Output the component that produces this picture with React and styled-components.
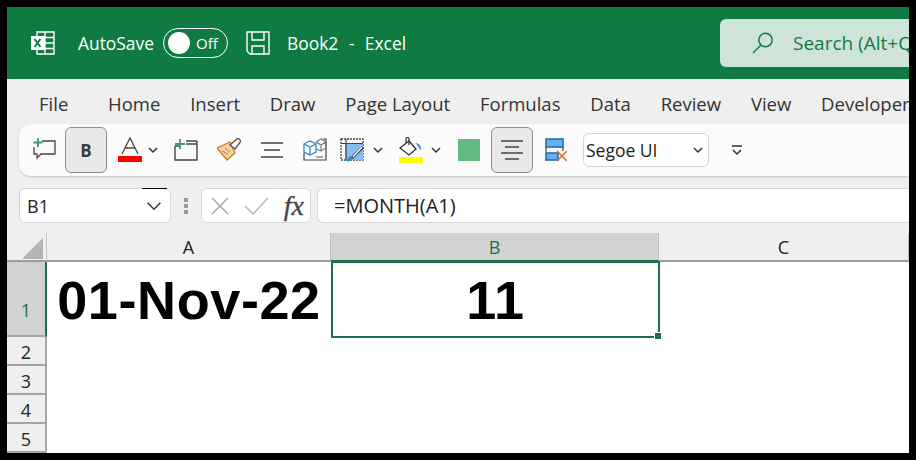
import React from 'react';
import styled, { createGlobalStyle } from 'styled-components';

const Global = createGlobalStyle`
  html, body {
    margin: 0;
    padding: 0;
    background: #000;
    font-family: "Open Sans", "Noto Sans", sans-serif;
  }
`;

const Frame = styled.div`
  width: 902px;
  height: 446px;
  margin: 7px;
  background: #efefef;
  overflow: hidden;
  display: flex;
  flex-direction: column;
`;

const TitleBar = styled.div`
  height: 72px;
  flex-shrink: 0;
  background: #107a43;
  color: #fff;
  display: flex;
  align-items: center;
  padding-left: 24px;
  font-size: 17.4px;
  white-space: nowrap;
`;

const AutoSave = styled.span`
  margin-left: 23px;
`;

const Toggle = styled.div`
  width: 65px;
  height: 30px;
  box-sizing: border-box;
  margin: 0 18px 0 9px;
  border: 1px solid #fff;
  border-radius: 15px;
  display: flex;
  align-items: center;
  padding-left: 4px;
  gap: 6px;
  font-size: 15px;
`;

const Knob = styled.span`
  width: 22px;
  height: 22px;
  border-radius: 50%;
  background: #fff;
`;

const DocName = styled.span`
  margin-left: 17px;
  word-spacing: 6px;
`;

const SearchBox = styled.div`
  margin-left: auto;
  width: 189px;
  height: 48px;
  flex-shrink: 0;
  box-sizing: border-box;
  background: #cfe4d9;
  border-radius: 6px 0 0 6px;
  display: flex;
  align-items: center;
  padding-left: 32px;
  gap: 19px;
  color: #107a43;
  font-size: 19px;
  overflow: hidden;
  & > * {
    flex-shrink: 0;
  }
`;

const Menu = styled.div`
  height: 45px;
  flex-shrink: 0;
  box-sizing: border-box;
  padding: 3px 0 0 32px;
  display: flex;
  align-items: center;
  gap: 29.8px;
  color: #333;
  font-size: 18.5px;
  white-space: nowrap;
`;

const FileTab = styled.span`
  margin-right: 10px;
`;

const Toolbar = styled.div`
  height: 52px;
  flex-shrink: 0;
  margin-left: 12px;
  background: #fbfbfb;
  border-radius: 12px 0 0 12px;
  box-shadow: 0 1px 2px rgba(0, 0, 0, 0.18);
  display: flex;
  align-items: center;
  padding-left: 4px;
`;

const Slot = styled.div`
  width: ${p => p.$w}px;
  height: ${p => (p.$active ? 46 : 42)}px;
  margin-left: ${p => p.$ml || 0}px;
  flex-shrink: 0;
  box-sizing: border-box;
  display: flex;
  align-items: center;
  justify-content: center;
  & > svg {
    flex-shrink: 0;
  }
  ${p => p.$active && `
    background: #e9e9e9;
    border: 1px solid #8f8f8f;
    border-radius: 6px;
  `}
`;

const BoldMark = styled.span`
  font-weight: 700;
  font-size: 17px;
  color: #3a3a3a;
`;

const FontSelect = styled.div`
  width: 126px;
  height: 34px;
  box-sizing: border-box;
  margin-left: 4px;
  flex-shrink: 0;
  background: #fff;
  border: 1px solid #d4d4d4;
  border-radius: 6px;
  display: flex;
  align-items: center;
  justify-content: space-between;
  padding: 0 5px 0 2px;
  font-size: 17.5px;
  color: #222;
`;

const FormulaRow = styled.div`
  height: 35px;
  flex-shrink: 0;
  margin: 12px 0 10px 12px;
  display: flex;
  align-items: stretch;
`;

const FieldBox = styled.div`
  background: #fff;
  border: 1px solid #d6d6d6;
  border-radius: 6px;
  box-sizing: border-box;
  display: flex;
  align-items: center;
  font-size: 18px;
  color: #222;
`;

const NameBox = styled(FieldBox)`
  position: relative;
  width: 152px;
  justify-content: space-between;
  padding: 0 8px 0 7px;
  &::before {
    content: "";
    position: absolute;
    top: -1px;
    left: 122px;
    width: 25px;
    height: 1px;
    background: #000;
  }
`;

const Grip = styled.div`
  width: 30px;
  display: flex;
  flex-direction: column;
  align-items: center;
  justify-content: center;
  gap: 2px;
  & > i {
    width: 4px;
    height: 4px;
    background: #9a9a9a;
  }
`;

const FxBox = styled(FieldBox)`
  width: 110px;
  justify-content: space-between;
  padding: 0 6px 0 9px;
`;

const FxMark = styled.span`
  font-family: "Liberation Serif", serif;
  font-style: italic;
  font-size: 28px;
  color: #444;
  -webkit-text-stroke: 0.3px #444;
`;

const Input = styled(FieldBox)`
  flex: 1;
  margin-left: 6px;
  padding-left: 16px;
  border-right: none;
  border-radius: 6px 0 0 6px;
  font-size: 20px;
`;

const Sheet = styled.div`
  flex: 1;
  display: grid;
  grid-template-columns: 40px 284px 328px 1fr;
  grid-template-rows: 29px 75px repeat(4, 29px);
  background: #fff;
`;

const Corner = styled.div`
  background: #efefef;
  border-right: 1px solid #c4c4c4;
  border-bottom: 2px solid #9d9d9d;
  display: flex;
  align-items: flex-end;
  justify-content: flex-end;
  padding: 0 3px 1px 0;
  box-sizing: border-box;
`;

const ColHead = styled.div`
  background: ${p => (p.$selected ? '#d2d2d2' : '#efefef')};
  border-bottom: 2px solid ${p => (p.$selected ? '#1e7145' : '#9d9d9d')};
  border-right: 1px solid #bdbdbd;
  box-sizing: border-box;
  display: flex;
  align-items: center;
  justify-content: center;
  font-size: 18px;
  color: ${p => (p.$selected ? '#1e7145' : '#222')};
`;

const RowHead = styled.div`
  background: ${p => (p.$selected ? '#d2d2d2' : '#efefef')};
  border-bottom: 2px solid #a5a5a5;
  border-right: 2px solid ${p => (p.$selected ? '#1e7145' : '#a5a5a5')};
  box-sizing: border-box;
  display: flex;
  align-items: ${p => (p.$selected ? 'flex-end' : 'center')};
  justify-content: center;
  padding-top: 2px;
  font-size: 18px;
  line-height: 1;
  color: ${p => (p.$selected ? '#1e7145' : '#222')};
  ${p => p.$selected && 'padding-bottom: 16px;'}
`;

const Cell = styled.div`
  background: #fff;
  display: flex;
  align-items: center;
  justify-content: center;
  font-family: "Liberation Sans", Arial, sans-serif;
  font-weight: 700;
  font-size: 54px;
  letter-spacing: 0.6px;
  color: #000;
  white-space: nowrap;
`;

const ActiveCell = styled(Cell)`
  position: relative;
  margin: -1px -1px -1px 0;
  border: 2px solid #1e7145;
  box-sizing: border-box;
`;

const FillHandle = styled.span`
  position: absolute;
  right: -4px;
  bottom: -4px;
  width: 6px;
  height: 6px;
  background: #1e7145;
  border: 1px solid #fff;
`;

const Chevron = ({ size = 10, color = '#333', stroke = 1.5 }) => (
  <svg width={size} height={size} viewBox="0 0 10 10">
    <path d="M1 3l4 4 4-4" fill="none" stroke={color} strokeWidth={stroke} />
  </svg>
);

const ExcelIcon = () => (
  <svg width="24" height="24" viewBox="0 0 24 24">
    <path d="M6 1h17v22H6z" fill="none" stroke="#fff" strokeWidth="1.4" />
    <path d="M14 1v22M14 6.500h9M14 12h9M14 17.500h9" stroke="#fff" strokeWidth="1.4" />
    <rect x="0" y="5" width="14" height="14" fill="#fff" />
    <path d="M3.500 8l6 8M9.500 8l-6 8" stroke="#107a43" strokeWidth="2" />
  </svg>
);

const SaveIcon = () => (
  <svg width="24" height="24" viewBox="0 0 24 24" fill="none" stroke="#fff" strokeWidth="1.4">
    <path d="M1 1h22v22H4l-3-3z" />
    <path d="M6 1v8h12V1M6 23v-8h12v8" />
  </svg>
);

const SearchIcon = () => (
  <svg width="22" height="22" viewBox="0 0 22 22" fill="none" stroke="#107a43" strokeWidth="1.5">
    <circle cx="13.500" cy="8" r="6.700" />
    <path d="M9 13L1 21" />
  </svg>
);

const CommentIcon = () => (
  <svg width="24" height="24" viewBox="0 0 24 24" fill="none">
    <path d="M10 3h13v13H9l-4 4v-4H2V9" stroke="#444" strokeWidth="1.3" />
    <path d="M6 0v9M1.500 4.500h9" stroke="#3a9a6a" strokeWidth="1.8" />
  </svg>
);

const FontColorIcon = () => (
  <svg width="24" height="26" viewBox="0 0 24 26" fill="none">
    <path d="M4 17L12 1l8 16M7 11h10" stroke="#444" strokeWidth="1.3" />
    <rect y="19" width="24" height="6" fill="#f00" />
  </svg>
);

const NewSheetIcon = () => (
  <svg width="24" height="24" viewBox="0 0 24 24" fill="none">
    <path d="M12 3h11M23 6H12M1 8v14h22V3" stroke="#444" strokeWidth="1.4" />
    <path d="M1 8h5" stroke="#444" strokeWidth="1.4" />
    <path d="M6 1v10M1 6h10" stroke="#3a9a6a" strokeWidth="1.8" />
  </svg>
);

const BrushIcon = () => (
  <svg width="24" height="24" viewBox="0 0 24 24">
    <path d="M0 10l13-6 5 11-8 7z" fill="#f6d2a4" stroke="#cf7a20" strokeWidth="1.3" />
    <path d="M5 13l6 3M8 10l5 4" stroke="#cf7a20" strokeWidth="1" />
    <path d="M13 7l8-7 3 3-6 8z" fill="#fff" stroke="#555" strokeWidth="1.4" />
  </svg>
);

const AlignIcon = () => (
  <svg width="22" height="16" viewBox="0 0 22 16">
    <path d="M0 1h22M3 8h16M0 15h22" stroke="#444" strokeWidth="1.3" />
  </svg>
);

const AlignCenterIcon = () => (
  <svg width="24" height="20" viewBox="0 0 24 20">
    <path d="M1 1h22M5 7h14M1 13h22M5 19h14" stroke="#444" strokeWidth="1.3" />
  </svg>
);

const CubesIcon = () => (
  <svg width="24" height="24" viewBox="0 0 24 24" fill="none">
    <path d="M1 15v7h22V1h-3" stroke="#444" strokeWidth="1.2" />
    <path d="M1 6l6-3 6 3v8l-6 3-6-3zM1 6l6 3 6-3M7 9v8" fill="#fff" stroke="#2f86d0" strokeWidth="1.3" />
    <path d="M13 4l5-3 5 3v6l-5 3-5-2M13 4l5 3 5-3M18 7v6" stroke="#777" strokeWidth="1.1" />
    <path d="M13 19h7" stroke="#555" strokeWidth="1" />
  </svg>
);

const BorderIcon = () => (
  <svg width="24" height="24" viewBox="0 0 24 24" fill="none">
    <rect x="1" y="1" width="22" height="21" stroke="#444" strokeWidth="1.3" strokeDasharray="2 1" />
    <rect x="5" y="6" width="18" height="16" fill="#86bdf0" />
    <path d="M1 5.500h22M6 1v21" stroke="#444" strokeWidth="1.2" />
    <path d="M23 9L12 20" stroke="#444" strokeWidth="3" />
    <path d="M22 9L13 19" stroke="#fff" strokeWidth="1.2" />
    <path d="M9 19c2-2 4 0 3 2-1 2-4 3-6 2 1-1 2-2 3-4z" fill="#2f86d0" />
  </svg>
);

const FillIcon = () => (
  <svg width="24" height="26" viewBox="0 0 24 26" fill="none">
    <path d="M1 11l9-7 7 8-7 6z" fill="#fff" stroke="#333" strokeWidth="1.3" />
    <path d="M7 6V2c0-2 3-2 3 0v6" stroke="#333" strokeWidth="1.2" />
    <path d="M16 6c4 0 6 3 6 7-2-1-2-4-6-7z" fill="#2f86d0" />
    <rect y="20" width="24" height="6" fill="#ff0" />
  </svg>
);

const Swatch = styled.span`
  width: 22px;
  height: 22px;
  background: #63bb83;
`;

const DeleteFmtIcon = () => (
  <svg width="22" height="24" viewBox="0 0 22 24" fill="none">
    <rect x="1" y="1" width="17" height="8" fill="#6cb0ea" stroke="#1f70bd" strokeWidth="1.6" />
    <path d="M1 9v5M18 9v4" stroke="#444" strokeWidth="1.2" />
    <rect x="1" y="15" width="12" height="7" fill="#6cb0ea" stroke="#1f70bd" strokeWidth="1.6" />
    <path d="M12 13l10 10M22 13L12 23" stroke="#e8641c" strokeWidth="1.5" />
  </svg>
);

const MoreIcon = () => (
  <svg width="12" height="11" viewBox="0 0 12 11" fill="none" stroke="#333" strokeWidth="1.5">
    <path d="M1 1h10M2 5l4 4 4-4" />
  </svg>
);

const CornerMark = () => (
  <svg width="21" height="21" viewBox="0 0 21 21">
    <path d="M21 0v21H0z" fill="#b4b4b4" />
  </svg>
);

const CrossMark = () => (
  <svg width="18" height="18" viewBox="0 0 18 18">
    <path d="M1 1l16 16M17 1L1 17" stroke="#a8a8a8" strokeWidth="1.5" />
  </svg>
);

const CheckMark = () => (
  <svg width="25" height="18" viewBox="0 0 25 18">
    <path d="M1 9l8 8L24 1" fill="none" stroke="#b8b8b8" strokeWidth="1.5" />
  </svg>
);

const tabs = ['Home', 'Insert', 'Draw', 'Page Layout', 'Formulas', 'Data', 'Review', 'View', 'Developer'];

export default function App() {
  return (
    <Frame>
      <Global />
      <TitleBar>
        <ExcelIcon />
        <AutoSave>AutoSave</AutoSave>
        <Toggle>
          <Knob />
          Off
        </Toggle>
        <SaveIcon />
        <DocName>Book2 - Excel</DocName>
        <SearchBox>
          <SearchIcon />
          <span>Search (Alt+Q)</span>
        </SearchBox>
      </TitleBar>
      <Menu>
        <FileTab>File</FileTab>
        {tabs.map(t => (
          <span key={t}>{t}</span>
        ))}
      </Menu>
      <Toolbar>
        <Slot $w={42}><CommentIcon /></Slot>
        <Slot $w={42} $active><BoldMark>B</BoldMark></Slot>
        <Slot $w={38} $ml={4}><FontColorIcon /></Slot>
        <Slot $w={8}><Chevron /></Slot>
        <Slot $w={58}><NewSheetIcon /></Slot>
        <Slot $w={28}><BrushIcon /></Slot>
        <Slot $w={58}><AlignIcon /></Slot>
        <Slot $w={28}><CubesIcon /></Slot>
        <Slot $w={46}><BorderIcon /></Slot>
        <Slot $w={6}><Chevron /></Slot>
        <Slot $w={40} $ml={10}><FillIcon /></Slot>
        <Slot $w={10}><Chevron /></Slot>
        <Slot $w={44} $ml={6}><Swatch /></Slot>
        <Slot $w={42} $active><AlignCenterIcon /></Slot>
        <Slot $w={46}><DeleteFmtIcon /></Slot>
        <FontSelect>
          <span>Segoe UI</span>
          <Chevron />
        </FontSelect>
        <Slot $w={56}><MoreIcon /></Slot>
      </Toolbar>
      <FormulaRow>
        <NameBox>
          <span>B1</span>
          <Chevron size={16} stroke={0.9} />
        </NameBox>
        <Grip><i /><i /><i /></Grip>
        <FxBox>
          <CrossMark />
          <CheckMark />
          <FxMark>fx</FxMark>
        </FxBox>
        <Input>=MONTH(A1)</Input>
      </FormulaRow>
      <Sheet>
        <Corner><CornerMark /></Corner>
        <ColHead>A</ColHead>
        <ColHead $selected>B</ColHead>
        <ColHead>C</ColHead>
        <RowHead $selected>1</RowHead>
        <Cell>01-Nov-22</Cell>
        <ActiveCell>11<FillHandle /></ActiveCell>
        <Cell />
        {[2, 3, 4, 5].flatMap(n => [
          <RowHead key={n}>{n}</RowHead>,
          <Cell key={`${n}a`} />,
          <Cell key={`${n}b`} />,
          <Cell key={`${n}c`} />,
        ])}
      </Sheet>
    </Frame>
  );
}
